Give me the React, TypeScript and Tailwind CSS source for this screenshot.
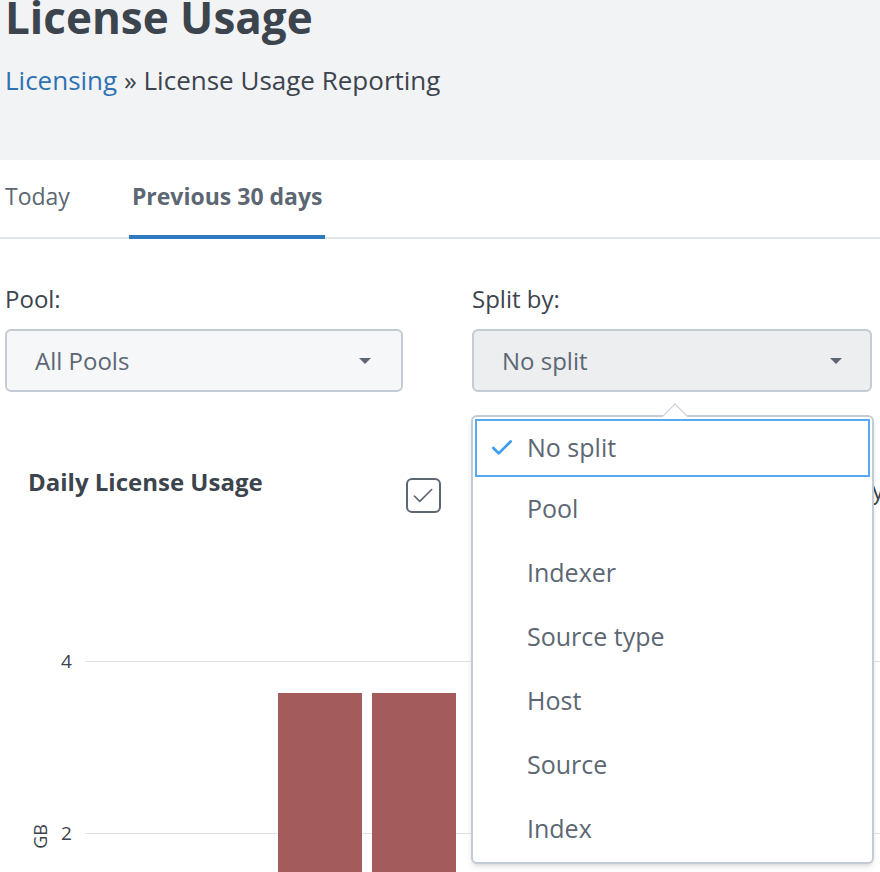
import { Check } from "lucide-react";

const items = ["Pool", "Indexer", "Source type", "Host", "Source", "Index"];

function Caret() {
    return <div className="w-0 h-0 border-l-[6px] border-r-[6px] border-t-[6px] border-l-transparent border-r-transparent border-t-[#5c6773]" />;
}

export default function App() {
    return (
        <div className="relative w-[880px] h-[872px] overflow-hidden bg-white text-[#3c444d]" style={{ fontFamily: "'Open Sans', 'Liberation Sans', sans-serif" }}>
            <div className="bg-[#f2f3f5] h-[165px] px-[5px]">
                <h1 className="text-[44px] font-bold leading-none -mt-[5px]">License Usage</h1>
                <div className="text-[26px] mt-[22px]">
                    <span className="text-[#2f72b2]">Licensing</span> » License Usage Reporting
                </div>
            </div>
            <div className="flex border-b-2 border-[#e1e6eb] h-[79px] text-[23px] text-[#5c6773]">
                <div className="px-[5px] pt-[19px]">Today</div>
                <div className="ml-[54px] px-[3px] pt-[19px] font-bold border-b-[4px] border-[#2f7abf] -mb-[2px]">Previous 30 days</div>
            </div>
            <div className="flex px-[5px] pt-[42px] gap-[69px] text-[24px]">
                <div className="w-[398px]">
                    <div className="mb-[12px]">Pool:</div>
                    <div className="h-[63px] rounded-md border-2 border-[#c3cbd4] bg-[#f6f7f8] flex items-center justify-between pl-[28px] pr-[30px] text-[#5c6773]">
                        All Pools <Caret />
                    </div>
                </div>
                <div className="w-[400px]">
                    <div className="mb-[12px]">Split by:</div>
                    <div className="h-[63px] rounded-md border-2 border-[#c3cbd4] bg-[#eceeef] flex items-center justify-between pl-[28px] pr-[28px] text-[#5c6773]">
                        No split <Caret />
                    </div>
                </div>
            </div>
            <div className="relative flex items-start px-[28px] pt-[72px]">
                <div className="text-[24px] font-bold">Daily License Usage</div>
                <div className="ml-[143px] mt-[14px] w-[35px] h-[35px] border-2 border-[#5c6773] rounded-md flex items-center justify-center">
                    <Check size={26} strokeWidth={1.5} className="text-[#5c6773]" />
                </div>
                <span className="absolute left-[872px] top-[80px] text-[24px]">y</span>
            </div>
            <div className="relative h-[360px]">
                <div className="absolute left-[85px] right-0 top-[148px] border-t border-[#dfe3e8]" />
                <div className="absolute left-[85px] right-0 top-[320px] border-t border-[#dfe3e8]" />
                <div className="absolute left-[61px] top-[134px] text-[19px]">4</div>
                <div className="absolute left-[61px] top-[306px] text-[19px]">2</div>
                <div className="absolute left-[28px] top-[310px] text-[18px] -rotate-90">GB</div>
                <div className="absolute left-[278px] top-[180px] w-[84px] h-[200px] bg-[#a45b5b]" />
                <div className="absolute left-[372px] top-[180px] w-[84px] h-[200px] bg-[#a45b5b]" />
            </div>
            <div className="absolute left-[471px] top-[415px] w-[403px] h-[449px] bg-white border-2 border-[#c3cbd4] rounded-md shadow-md p-[2px] text-[25px] text-[#5c6773]">
                <div className="absolute left-[193px] -top-[10px] w-[18px] h-[18px] rotate-45 bg-white border-l border-t border-[#c3cbd4]" />
                <div className="relative h-[58px] border-2 border-[#58aaf0] flex items-center pl-[12px]">
                    <Check size={26} strokeWidth={2.5} className="text-[#3d9cf0] mr-[12px]" />
                    No split
                </div>
                {items.map((it) => (
                    <div key={it} className="h-[64px] flex items-center pl-[52px]">{it}</div>
                ))}
            </div>
        </div>
    );
}
